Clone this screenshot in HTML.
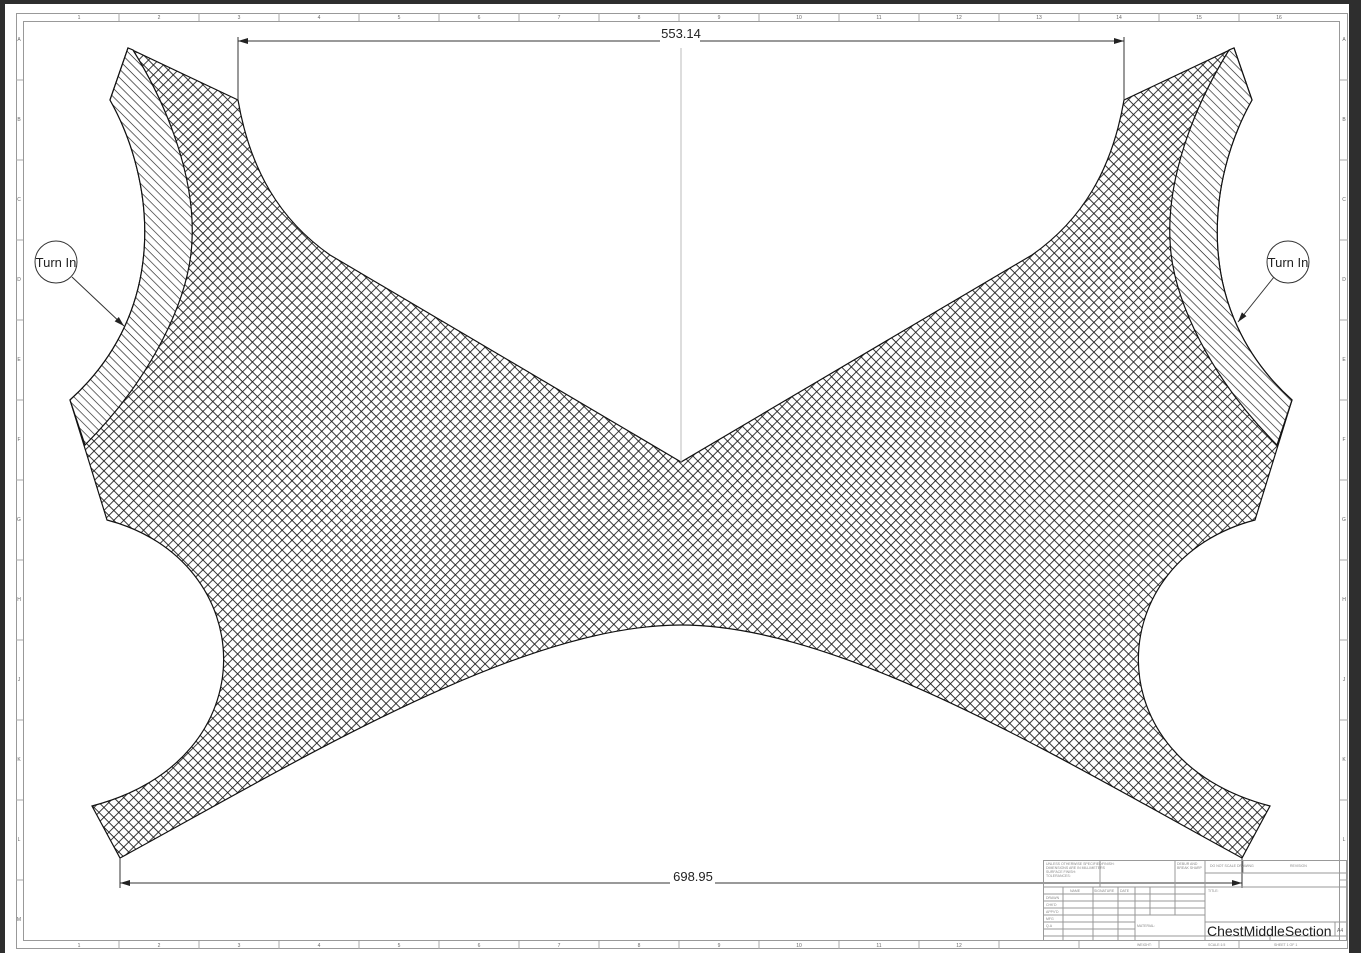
<!DOCTYPE html>
<html><head><meta charset="utf-8"><style>
html,body{margin:0;padding:0;background:#2e2e2e;}
svg{display:block}
text{font-family:"Liberation Sans",sans-serif}
</style></head><body>
<svg width="1361" height="953" viewBox="0 0 1361 953" xmlns="http://www.w3.org/2000/svg">
<defs>
<pattern id="xh" width="7" height="7" patternUnits="userSpaceOnUse" patternTransform="rotate(45)">
<rect width="7" height="7" fill="#fff"/>
<path d="M0,0V7M0,0H7" stroke="#1a1a1a" stroke-width="1.7"/>
</pattern>
<pattern id="dh" width="6" height="6" patternUnits="userSpaceOnUse" patternTransform="rotate(45)">
<rect width="6" height="6" fill="#fff"/>
<path d="M0,0H6" stroke="#1a1a1a" stroke-width="1.3"/>
</pattern>
<marker id="ar" markerWidth="10" markerHeight="6" refX="10" refY="3" orient="auto" markerUnits="userSpaceOnUse"><path d="M0,0L10,3L0,6Z" fill="#222"/></marker>
</defs>
<rect x="5" y="4" width="1344" height="949" fill="#fff"/>
<rect x="16.5" y="13.5" width="1331" height="935" fill="none" stroke="#999"/>
<rect x="23.5" y="21.5" width="1316" height="919" fill="none" stroke="#999"/>
<g stroke="#aaa">
<path d="M119,13v8M199,13v8M279,13v8M359,13v8M439,13v8M519,13v8M599,13v8M679,13v8M759,13v8M839,13v8M919,13v8M999,13v8M1079,13v8M1159,13v8M1239,13v8"/>
<path d="M119,941v8M199,941v8M279,941v8M359,941v8M439,941v8M519,941v8M599,941v8M679,941v8M759,941v8M839,941v8M919,941v8M999,941v8M1079,941v8M1159,941v8M1239,941v8"/>
<path d="M16,80h7M16,160h7M16,240h7M16,320h7M16,400h7M16,480h7M16,560h7M16,640h7M16,720h7M16,800h7M16,880h7"/>
<path d="M1340,80h8M1340,160h8M1340,240h8M1340,320h8M1340,400h8M1340,480h8M1340,560h8M1340,640h8M1340,720h8M1340,800h8M1340,880h8"/>
</g>
<g font-size="5" fill="#666" text-anchor="middle">
<text x="79" y="19">1</text><text x="159" y="19">2</text><text x="239" y="19">3</text><text x="319" y="19">4</text><text x="399" y="19">5</text><text x="479" y="19">6</text><text x="559" y="19">7</text><text x="639" y="19">8</text><text x="719" y="19">9</text><text x="799" y="19">10</text><text x="879" y="19">11</text><text x="959" y="19">12</text><text x="1039" y="19">13</text><text x="1119" y="19">14</text><text x="1199" y="19">15</text><text x="1279" y="19">16</text>
<text x="79" y="947">1</text><text x="159" y="947">2</text><text x="239" y="947">3</text><text x="319" y="947">4</text><text x="399" y="947">5</text><text x="479" y="947">6</text><text x="559" y="947">7</text><text x="639" y="947">8</text><text x="719" y="947">9</text><text x="799" y="947">10</text><text x="879" y="947">11</text><text x="959" y="947">12</text>
<text x="19" y="41">A</text><text x="19" y="121">B</text><text x="19" y="201">C</text><text x="19" y="281">D</text><text x="19" y="361">E</text><text x="19" y="441">F</text><text x="19" y="521">G</text><text x="19" y="601">H</text><text x="19" y="681">J</text><text x="19" y="761">K</text><text x="19" y="841">L</text><text x="19" y="921">M</text>
<text x="1344" y="41">A</text><text x="1344" y="121">B</text><text x="1344" y="201">C</text><text x="1344" y="281">D</text><text x="1344" y="361">E</text><text x="1344" y="441">F</text><text x="1344" y="521">G</text><text x="1344" y="601">H</text><text x="1344" y="681">J</text><text x="1344" y="761">K</text><text x="1344" y="841">L</text>
</g>
<path d="M681,462 L330,255 C280,220 250,170 238,100 L128,48 L110,100 C155,180 170,310 70,400 L107,520 C260,560 270,760 92,806 L120,858 C300,760 520,625 681,625 C842,625 1062,760 1242,858 L1270,806 C1092,760 1102,560 1255,520 L1292,400 C1192,310 1207,180 1252,100 L1234,48 L1124,100 C1112,170 1082,220 1032,255 Z" fill="url(#xh)" stroke="#111" stroke-width="1.2"/>
<path d="M128,48 L110,100 C155,180 170,310 70,400 L85,445 C150,380 190,300 192,240 C195,180 170,110 133,50 Z" fill="url(#dh)" stroke="#111" stroke-width="1.2"/>
<path d="M1234,48 L1252,100 C1207,180 1192,310 1292,400 L1277,445 C1212,380 1172,300 1170,240 C1167,180 1192,110 1229,50 Z" fill="url(#dh)" stroke="#111" stroke-width="1.2"/>
<line x1="681" y1="48" x2="681" y2="462" stroke="#bbb" stroke-width="1"/>
<g stroke="#333" stroke-width="1" fill="none">
<path d="M238,100V37M1124,100V37"/>
<line x1="660" y1="41" x2="238" y2="41" marker-end="url(#ar)"/>
<line x1="700" y1="41" x2="1124" y2="41" marker-end="url(#ar)"/>
<path d="M120,858V888M1242,858V888"/>
<line x1="670" y1="883" x2="120" y2="883" marker-end="url(#ar)"/>
<line x1="715" y1="883" x2="1242" y2="883" marker-end="url(#ar)"/>
<line x1="72" y1="277" x2="124" y2="326" marker-end="url(#ar)"/>
<line x1="1274" y1="277" x2="1238" y2="322" marker-end="url(#ar)"/>
<circle cx="56" cy="262" r="21" fill="#fff"/>
<circle cx="1288" cy="262" r="21" fill="#fff"/>
</g>
<g font-size="13" fill="#222" text-anchor="middle">
<text x="681" y="38">553.14</text>
<text x="693" y="881">698.95</text>
<text x="56" y="267">Turn In</text>
<text x="1288" y="267">Turn In</text>
</g>
<g stroke="#999" stroke-width="1" fill="none">
<rect x="1043.5" y="860.5" width="303" height="80"/>
<path d="M1043,887H1347M1100,860V887M1175,860V887M1205,860V941M1243,860V873M1205,873H1347"/>
<path d="M1043,894H1205M1043,901H1205M1043,908H1205M1043,915H1205M1043,922H1135M1043,929H1135M1043,936H1347M1205,922H1347"/>
<path d="M1063,887V941M1093,887V941M1118,887V941M1135,887V941M1150,887V915M1175,887V915M1335,922V936M1270,936V941"/>
</g>
<g font-size="3.5" fill="#888">
<text x="1046" y="865">UNLESS OTHERWISE SPECIFIED:</text>
<text x="1046" y="869">DIMENSIONS ARE IN MILLIMETERS</text>
<text x="1046" y="873">SURFACE FINISH:</text>
<text x="1046" y="877">TOLERANCES:</text>
<text x="1102" y="865">FINISH:</text>
<text x="1177" y="865">DEBUR AND</text>
<text x="1177" y="869">BREAK SHARP</text>
<text x="1210" y="867">DO NOT SCALE DRAWING</text>
<text x="1290" y="867">REVISION</text>
<text x="1070" y="892">NAME</text><text x="1094" y="892">SIGNATURE</text><text x="1120" y="892">DATE</text>
<text x="1046" y="899">DRAWN</text><text x="1046" y="906">CHK'D</text><text x="1046" y="913">APPV'D</text><text x="1046" y="920">MFG</text><text x="1046" y="927">Q.A</text>
<text x="1137" y="927">MATERIAL:</text><text x="1137" y="946">WEIGHT:</text>
<text x="1208" y="892">TITLE:</text><text x="1208" y="946">SCALE:1:5</text><text x="1274" y="946">SHEET 1 OF 1</text>
</g>
<text x="1207" y="936" font-size="14" fill="#222">ChestMiddleSection</text>
<text x="1337" y="932" font-size="5" fill="#666">A4</text>
</svg>
</body></html>
